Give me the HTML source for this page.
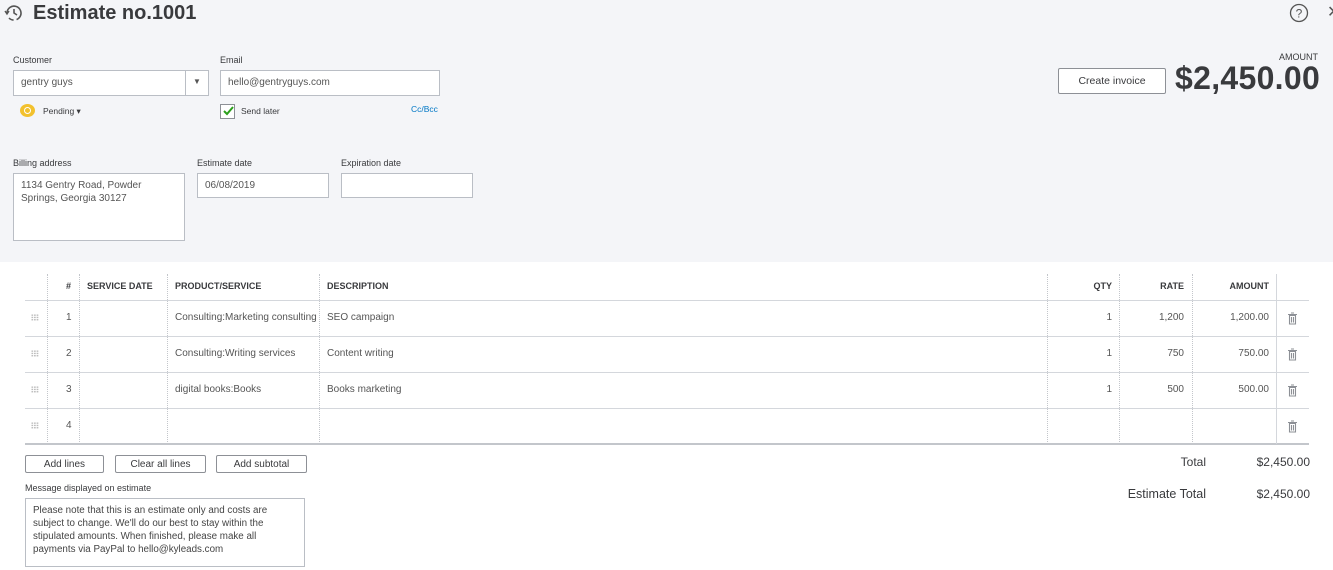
<!DOCTYPE html>
<html><head><style>
*{box-sizing:border-box;margin:0;padding:0}
body{width:1333px;height:570px;overflow:hidden;background:#fff;font-family:"Liberation Sans",sans-serif;color:#393a3d;position:relative;font-size:10px}
.a{position:absolute}
.top{position:absolute;left:0;top:0;width:1333px;height:262px;background:#f4f5f8}
.lbl{position:absolute;font-size:9px;color:#393a3d}
.inp{position:absolute;background:#fff;border:1px solid #babec5;font-size:10px;color:#555;padding:5px 7px;line-height:13px}
.btn{position:absolute;border:1px solid #8d9096;border-radius:2px;background:#fff;font-size:10px;text-align:center;color:#393a3d}
.hl{position:absolute;left:25px;width:1284px;height:1px;background:#d4d7dc}
.vl{position:absolute;top:274px;height:170px;border-left:1px dotted #c3c6cb}
.th{position:absolute;top:281px;font-size:9px;font-weight:bold;color:#393a3d}
.td{position:absolute;font-size:10px;color:#555}
.r{text-align:right}
.drag{position:absolute;left:31px;width:8px;height:7px;background-image:radial-gradient(#bbb 0.8px,transparent 1px);background-size:2.6px 2.3px}
</style></head><body>
<div class="top"></div>
<svg class="a" style="left:4px;top:4px" width="20" height="18" viewBox="0 0 20 18"><path d="M3 9a7 7 0 1 1 2 5" fill="none" stroke="#555" stroke-width="1.6" stroke-dasharray="30 3"/><path d="M10 5v4l3 2" fill="none" stroke="#555" stroke-width="1.6"/><path d="M1 7l2 3 2-3" fill="none" stroke="#555" stroke-width="1.4"/></svg>
<div class="a" style="left:33px;top:2px;font-size:20px;font-weight:bold;color:#393a3d">Estimate no.1001</div>
<svg class="a" style="left:1289px;top:3px" width="20" height="20"><circle cx="10" cy="10" r="8.5" fill="none" stroke="#555" stroke-width="1.3"/><text x="10" y="14.5" text-anchor="middle" font-size="12" font-family="Liberation Sans" fill="#555">?</text></svg>
<div class="a" style="left:1327px;top:2px;font-size:16px;color:#555">✕</div>

<div class="lbl" style="left:13px;top:55px">Customer</div>
<div class="inp" style="left:13px;top:70px;width:196px;height:26px">gentry guys</div>
<div class="a" style="left:185px;top:71px;width:1px;height:24px;background:#babec5"></div>
<div class="a" style="left:193px;top:77px;font-size:8px;color:#555">▼</div>
<div class="a" style="left:20px;top:104px;width:15px;height:13px;border-radius:50%;background:#f2c12e"></div>
<div class="a" style="left:24px;top:107px;width:7px;height:7px;border-radius:50%;border:1px solid #fff"></div>
<div class="a" style="left:43px;top:106px;font-size:8.5px">Pending ▾</div>

<div class="lbl" style="left:220px;top:55px">Email</div>
<div class="inp" style="left:220px;top:70px;width:220px;height:26px">hello@gentryguys.com</div>
<div class="a" style="left:220px;top:104px;width:15px;height:15px;border:1px solid #8d9096;background:#fff"></div>
<svg class="a" style="left:222px;top:105px" width="12" height="12"><path d="M2 6l3 3 6-7" fill="none" stroke="#2ca01c" stroke-width="2"/></svg>
<div class="a" style="left:241px;top:106px;font-size:8.5px">Send later</div>
<div class="a" style="left:411px;top:104px;font-size:8.5px;color:#0077c5">Cc/Bcc</div>

<div class="a" style="left:1279px;top:52px;font-size:9px">AMOUNT</div>
<div class="btn" style="left:1058px;top:68px;width:108px;height:26px;line-height:24px;font-size:10.5px">Create invoice</div>
<div class="a" style="left:1175px;top:60px;font-size:32px;font-weight:bold;color:#393a3d;letter-spacing:0.3px">$2,450.00</div>

<div class="lbl" style="left:13px;top:158px">Billing address</div>
<div class="inp" style="left:13px;top:173px;width:172px;height:68px;padding-right:20px">1134 Gentry Road, Powder Springs, Georgia 30127</div>
<div class="lbl" style="left:197px;top:158px">Estimate date</div>
<div class="inp" style="left:197px;top:173px;width:132px;height:25px">06/08/2019</div>
<div class="lbl" style="left:341px;top:158px">Expiration date</div>
<div class="inp" style="left:341px;top:173px;width:132px;height:25px"></div>

<div class="hl" style="top:300px"></div><div class="hl" style="top:336px"></div><div class="hl" style="top:372px"></div><div class="hl" style="top:408px"></div>
<div class="hl" style="top:443px;height:2px;background:#c3c6cb"></div>
<div class="vl" style="left:47px"></div><div class="vl" style="left:79px"></div><div class="vl" style="left:167px"></div><div class="vl" style="left:319px"></div><div class="vl" style="left:1047px"></div><div class="vl" style="left:1119px"></div><div class="vl" style="left:1192px"></div>
<div class="a" style="left:1276px;top:274px;width:1px;height:170px;background:#d4d7dc"></div>
<div class="th" style="left:66px">#</div>
<div class="th" style="left:87px">SERVICE DATE</div>
<div class="th" style="left:175px">PRODUCT/SERVICE</div>
<div class="th" style="left:327px">DESCRIPTION</div>
<div class="th r" style="left:1050px;width:62px">QTY</div>
<div class="th r" style="left:1122px;width:62px">RATE</div>
<div class="th r" style="left:1195px;width:74px">AMOUNT</div>

<div class="drag" style="top:314px"></div><div class="drag" style="top:350px"></div><div class="drag" style="top:386px"></div><div class="drag" style="top:422px"></div>
<div class="td" style="left:66px;top:312px">1</div><div class="td" style="left:66px;top:348px">2</div><div class="td" style="left:66px;top:384px">3</div><div class="td" style="left:66px;top:420px">4</div>
<div class="td" style="left:175px;top:312px;width:144px;overflow:hidden;white-space:nowrap">Consulting:Marketing consulting</div>
<div class="td" style="left:175px;top:348px">Consulting:Writing services</div>
<div class="td" style="left:175px;top:384px">digital books:Books</div>
<div class="td" style="left:327px;top:312px">SEO campaign</div>
<div class="td" style="left:327px;top:348px">Content writing</div>
<div class="td" style="left:327px;top:384px">Books marketing</div>
<div class="td r" style="left:1050px;width:62px;top:312px">1</div><div class="td r" style="left:1050px;width:62px;top:348px">1</div><div class="td r" style="left:1050px;width:62px;top:384px">1</div>
<div class="td r" style="left:1122px;width:62px;top:312px">1,200</div><div class="td r" style="left:1122px;width:62px;top:348px">750</div><div class="td r" style="left:1122px;width:62px;top:384px">500</div>
<div class="td r" style="left:1195px;width:74px;top:312px">1,200.00</div><div class="td r" style="left:1195px;width:74px;top:348px">750.00</div><div class="td r" style="left:1195px;width:74px;top:384px">500.00</div>
<svg class="a" style="left:1287px;top:312px" width="11" height="13"><path d="M1 2.5h9M4 1h3M2.5 3.5h6v8.5h-6z M4.5 5v5.5M6.5 5v5.5" fill="none" stroke="#8d9096" stroke-width="1.1"/></svg>
<svg class="a" style="left:1287px;top:348px" width="11" height="13"><path d="M1 2.5h9M4 1h3M2.5 3.5h6v8.5h-6z M4.5 5v5.5M6.5 5v5.5" fill="none" stroke="#8d9096" stroke-width="1.1"/></svg>
<svg class="a" style="left:1287px;top:384px" width="11" height="13"><path d="M1 2.5h9M4 1h3M2.5 3.5h6v8.5h-6z M4.5 5v5.5M6.5 5v5.5" fill="none" stroke="#8d9096" stroke-width="1.1"/></svg>
<svg class="a" style="left:1287px;top:420px" width="11" height="13"><path d="M1 2.5h9M4 1h3M2.5 3.5h6v8.5h-6z M4.5 5v5.5M6.5 5v5.5" fill="none" stroke="#8d9096" stroke-width="1.1"/></svg>

<div class="btn" style="left:25px;top:455px;width:79px;height:18px;line-height:17px">Add lines</div>
<div class="btn" style="left:115px;top:455px;width:91px;height:18px;line-height:17px">Clear all lines</div>
<div class="btn" style="left:216px;top:455px;width:91px;height:18px;line-height:17px">Add subtotal</div>
<div class="lbl" style="left:25px;top:483px">Message displayed on estimate</div>
<div class="inp" style="left:25px;top:498px;width:280px;height:69px;font-size:9.8px;line-height:13px;padding:5px 18px 5px 7px;color:#444">Please note that this is an estimate only and costs are subject to change. We'll do our best to stay within the stipulated amounts. When finished, please make all payments via PayPal to hello@kyleads.com</div>

<div class="a r" style="left:1090px;width:116px;top:455px;font-size:12px">Total</div>
<div class="a r" style="left:1210px;width:100px;top:455px;font-size:12px">$2,450.00</div>
<div class="a r" style="left:1090px;width:116px;top:487px;font-size:12.5px">Estimate Total</div>
<div class="a r" style="left:1210px;width:100px;top:487px;font-size:12px">$2,450.00</div>
</body></html>
